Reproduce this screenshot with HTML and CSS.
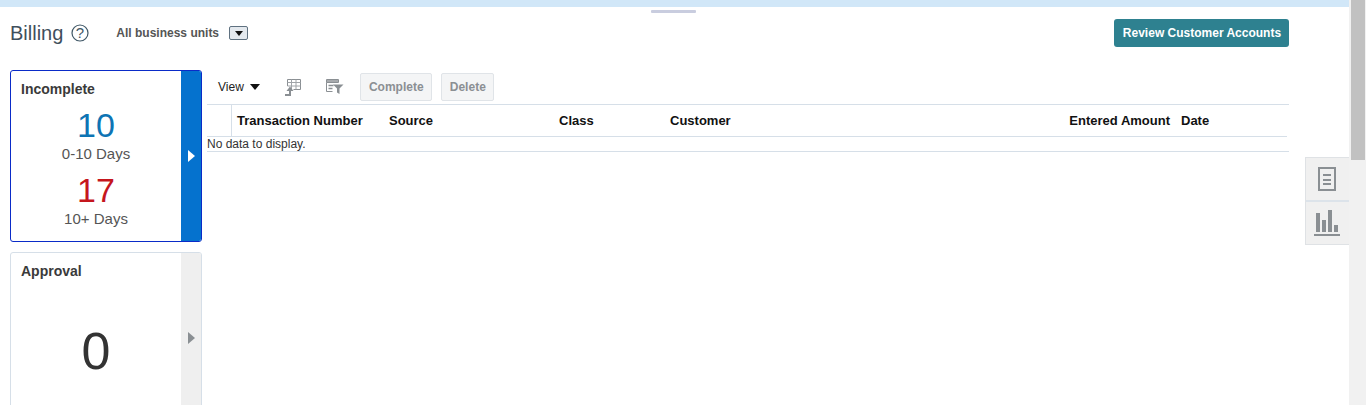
FILE: index.html
```html
<!DOCTYPE html>
<html lang="en">
<head>
<meta charset="utf-8">
<title>Billing</title>
<link rel="stylesheet" href="styles.css">
</head>
<body>
<div class="app">
  <main class="main">
    <div class="band"></div>
    <div class="grabber"></div>
    <header class="header">
      <h1 class="title">Billing</h1>
      <svg class="help" width="18" height="18" viewBox="0 0 18 18"><circle cx="9" cy="9" r="8" fill="none" stroke="#3f5766" stroke-width="1.2"/><text x="9" y="14" text-anchor="middle" class="help-q">?</text></svg>
      <span class="bu">All business units</span>
      <span class="bu-btn"><i class="caret-down small"></i></span>
      <button class="review">Review Customer Accounts</button>
    </header>
    <div class="content">
      <aside class="cards">
        <section class="card active">
          <div class="card-body">
            <h2 class="card-title">Incomplete</h2>
            <div class="metric blue">10</div>
            <div class="label">0-10 Days</div>
            <div class="metric red">17</div>
            <div class="label">10+ Days</div>
          </div>
          <div class="card-side"><i class="caret-right"></i></div>
        </section>
        <section class="card idle">
          <div class="card-body">
            <h2 class="card-title">Approval</h2>
            <div class="metric-big">0</div>
          </div>
          <div class="card-side"><i class="caret-right"></i></div>
        </section>
      </aside>
      <section class="panel">
        <div class="toolbar">
          <span class="view">View</span><i class="caret-down"></i>
          <svg class="tool first" width="16" height="18" viewBox="0 0 16 18" fill="none"><path d="M2.5 7V.5h13v10H8.5" stroke="#8a8f93"/><path d="M2.5 3.5h13M2.5 7h13M6.5.5v10M11 .5v10" stroke="#a0a4a8"/><path d="M0 16h5V9" stroke="#8a8f93" stroke-width="2"/><path d="M1.5 12L5 7.5 8.5 12z" fill="#8a8f93"/></svg>
          <svg class="tool second" width="18" height="16" viewBox="0 0 18 16" fill="none"><path d="M.5.5h12v3H.5zM.5 3.5v9h6" stroke="#8a8f93"/><path d="M.5 2h12M2.5 6.5h5M2.5 9.5h4" stroke="#8a8f93" stroke-width="1.5"/><path d="M7 5.5h10.5l-4 4v5.5l-2.5-1.5v-4z" fill="#8a8f93"/></svg>
          <button class="tb-btn complete">Complete</button>
          <button class="tb-btn delete">Delete</button>
        </div>
        <div class="table">
          <div class="thead">
            <div class="th sel"></div>
            <div class="th tn">Transaction Number</div>
            <div class="th src">Source</div>
            <div class="th cls">Class</div>
            <div class="th cust">Customer</div>
            <div class="th amt">Entered Amount</div>
            <div class="th date">Date</div>
          </div>
          <div class="empty">No data to display.</div>
        </div>
      </section>
    </div>
    <nav class="side-tabs">
      <div class="side-tab">
        <svg width="18" height="24" viewBox="0 0 18 24" fill="none" stroke="#8a8f93"><rect x="1" y="1" width="16" height="22" stroke-width="2"/><path d="M5 8h8M5 13h8M5 17h8" stroke-width="2"/></svg>
      </div>
      <div class="side-tab second">
        <svg width="26" height="26" viewBox="0 0 26 26" fill="#8a8f93"><rect x="2" y="3" width="4" height="19"/><rect x="8" y="10" width="4" height="12"/><rect x="14" y="0" width="4" height="22"/><rect x="20" y="15" width="4" height="7"/><rect x="0" y="24" width="26" height="2"/></svg>
      </div>
    </nav>
  </main>
  <div class="scrollbar"><div class="thumb"></div></div>
</div>
</body>
</html>
```
FILE: styles.css
```css
* { box-sizing: border-box; }
html, body { margin: 0; padding: 0; height: 405px; overflow: hidden; background: #fff; }
body { font-family: "Liberation Sans", Arial, sans-serif; font-size: 12px; color: #333; }
.app { display: flex; height: 405px; }
.main { position: relative; flex: 1; min-width: 0; }
.band { height: 7px; background: #d1e7f8; }
.grabber { position: absolute; left: 651px; top: 10px; width: 45px; height: 3px; border-radius: 1px; background: #c9cddf; }
.header { display: flex; align-items: center; height: 40px; margin-top: 6px; padding: 0 60px 0 10px; }
.title { margin: 0; font-size: 20px; font-weight: 400; color: #3f4f5c; }
.help { margin-left: 8px; }
.help-q { font: 15px "Liberation Sans", sans-serif; fill: #3f5766; }
.bu { margin-left: 27px; font-weight: 700; color: #555; }
.bu-btn { display: flex; align-items: center; justify-content: center; width: 19px; height: 14px; margin-left: 10px; border: 1px solid #5f7180; border-radius: 2px; background: #e4e9ee; }
.review { margin-left: auto; width: 175px; height: 28px; padding: 0 0 0 1px; border: 0; border-radius: 3px; background: #2e8190; color: #fff; font: 700 12px "Liberation Sans", sans-serif; }
.content { display: flex; margin-top: 17px; padding-left: 10px; padding-right: 60px; }
.cards { width: 192px; flex: none; display: flex; flex-direction: column; gap: 10px; }
.card { display: flex; border: 1px solid #d6dfe8; border-radius: 3px; overflow: hidden; }
.card.active { height: 172px; border-color: #0a2bc8; }
.card.idle { height: 172px; }
.card-body { flex: 1; min-width: 0; padding: 10px; text-align: center; }
.card-title { margin: 0; font-size: 14px; font-weight: 700; line-height: 17px; color: #3a3a3a; text-align: left; }
.metric { font-size: 34px; line-height: 36px; }
.metric.blue { margin-top: 9px; color: #0e74b4; }
.metric.red { margin-top: 8px; color: #c5161d; }
.label { margin-top: 1px; font-size: 15px; line-height: 20px; color: #555; }
.metric-big { margin-top: 41px; font-size: 52px; line-height: 60px; color: #333; }
.card-side { flex: none; width: 20px; display: flex; align-items: center; justify-content: center; background: #efefef; }
.active .card-side { background: #0572ce; }
.caret-right { width: 0; height: 0; border-left: 7px solid #8a8f93; border-top: 6px solid transparent; border-bottom: 6px solid transparent; }
.active .caret-right { border-left-color: #fff; }
.panel { flex: 1; min-width: 0; margin-left: 5px; margin-top: 3px; }
.toolbar { display: flex; align-items: center; height: 28px; padding-left: 11px; }
.view { color: #222; }
.caret-down { width: 0; height: 0; margin-left: 6px; border-top: 6px solid #111; border-left: 5px solid transparent; border-right: 5px solid transparent; }
.caret-down.small { margin-left: 0; border-top-width: 5px; border-left-width: 4px; border-right-width: 4px; }
.tool.first { margin-left: 25px; margin-top: 1px; }
.tool.second { margin-left: 25px; margin-top: -1px; }
.tb-btn { height: 28px; padding: 0 0 0 1px; border: 1px solid #e0e4e8; border-radius: 2px; background: #f4f5f6; color: #8b8f93; font: 700 12px "Liberation Sans", sans-serif; }
.complete { width: 72px; margin-left: 16px; }
.delete { width: 53px; margin-left: 9px; }
.table { margin-top: 3px; border-top: 1px solid #d6dfe8; }
.thead { display: flex; height: 32px; width: 1080px; border-bottom: 1px solid #d6dfe8; }
.th { font-size: 13px; font-weight: 700; line-height: 31px; color: #111; flex: none; white-space: nowrap; }
.th.sel { width: 25px; border-right: 1px solid #d6dfe8; }
.th.tn { width: 157px; padding-left: 5px; }
.th.src { width: 170px; }
.th.cls { width: 111px; }
.th.cust { width: 300px; }
.th.amt { width: 200px; text-align: right; }
.th.date { margin-left: 11px; }
.empty { height: 15px; line-height: 14px; border-bottom: 1px solid #d6dfe8; color: #333; }
.side-tabs { position: absolute; right: 0; top: 157px; width: 44px; border: 1px solid #dfe2e5; border-right: 0; background: #f0f0f0; }
.side-tab { display: flex; align-items: center; justify-content: center; height: 42px; padding-right: 2px; }
.side-tab.second { height: 44px; border-top: 2px solid #dce3ea; }
.scrollbar { flex: none; width: 17px; background: #f1f1f1; padding: 0 1px 0 2px; }
.thumb { height: 160px; background: #c1c1c1; }
```
